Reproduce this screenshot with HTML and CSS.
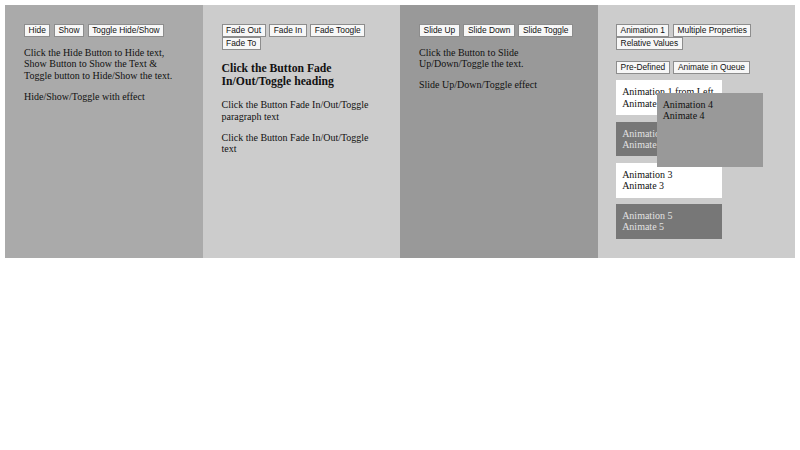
FILE: index.html
```html
<!DOCTYPE html>
<html lang="en">
<head>
<meta charset="utf-8">
<title>jQuery Effects</title>
<link rel="stylesheet" href="styles.css">
</head>
<body>
<div class="row">
  <section class="col col-a">
    <div class="btns">
      <button class="btn">Hide</button>
      <button class="btn">Show</button>
      <button class="btn">Toggle Hide/Show</button>
    </div>
    <p>Click the Hide Button to Hide text, Show Button to Show the Text &amp; Toggle button to Hide/Show the text.</p>
    <p>Hide/Show/Toggle with effect</p>
  </section>
  <section class="col col-b">
    <div class="btns">
      <button class="btn">Fade Out</button>
      <button class="btn">Fade In</button>
      <button class="btn">Fade Toogle</button>
      <button class="btn">Fade To</button>
    </div>
    <h3>Click the Button Fade In/Out/Toggle heading</h3>
    <p>Click the Button Fade In/Out/Toggle paragraph text</p>
    <p>Click the Button Fade In/Out/Toggle text</p>
  </section>
  <section class="col col-c">
    <div class="btns">
      <button class="btn">Slide Up</button>
      <button class="btn">Slide Down</button>
      <button class="btn">Slide Toggle</button>
    </div>
    <p>Click the Button to Slide Up/Down/Toggle the text.</p>
    <p>Slide Up/Down/Toggle effect</p>
  </section>
  <section class="col col-d">
    <div class="btns">
      <button class="btn">Animation 1</button>
      <button class="btn">Multiple Properties</button>
      <button class="btn">Relative Values</button>
    </div>
    <div class="btns btns-second">
      <button class="btn">Pre-Defined</button>
      <button class="btn">Animate in Queue</button>
    </div>
    <div class="boxes">
      <div class="box box-light">Animation 1 from Left<br>Animate 1</div>
      <div class="box box-dark">Animation 2<br>Animate 2</div>
      <div class="box box-light">Animation 3<br>Animate 3</div>
      <div class="box box-dark">Animation 5<br>Animate 5</div>
    </div>
    <div class="box box-moving">Animation 4<br>Animate 4</div>
  </section>
</div>
</body>
</html>
```
FILE: styles.css
```css
html, body {
  margin: 0;
  padding: 0;
  background: #fff;
}

body {
  padding: 5px;
  font-family: "Liberation Serif", "Times New Roman", serif;
  font-size: 10px;
  line-height: 11.33px;
  color: #111;
}

.row {
  display: grid;
  grid-template-columns: repeat(4, 1fr);
}

.col {
  padding: 19px 19px 19.5px 19px;
  min-width: 0;
}

.col-a { background: #aaaaaa; }
.col-b { background: #cccccc; }
.col-c { background: #999999; }
.col-d { background: #cccccc; position: relative; padding-left: 18.5px; }

.btns {
  display: flex;
  flex-wrap: wrap;
  column-gap: 3.5px;
  row-gap: 0;
}

.btns-second {
  margin-top: 11px;
}

.btn {
  font-family: "Liberation Sans", Arial, sans-serif;
  font-size: 8.4px;
  line-height: 9px;
  height: 13px;
  padding: 1px 3.6px;
  margin: 0;
  border: 1px solid #8d8d8d;
  border-radius: 0;
  background: #f7f7f7;
  color: #111;
  box-sizing: border-box;
}

p {
  margin: 9.85px 0 0 0;
}

h3 {
  font-size: 11.7px;
  line-height: 13.2px;
  font-weight: bold;
  margin: 11.5px 0 0 0;
}

h3 + p {
  margin-top: 11.5px;
}

.boxes {
  margin-top: 6.3px;
  display: flex;
  flex-direction: column;
  gap: 6.6px;
}

.box {
  width: 94px;
  padding: 6.15px;
  line-height: 11.2px;
}

.box-light {
  background: #ffffff;
  color: #111;
}

.box-dark {
  background: #777777;
  color: #e2e2e2;
}

.box-moving {
  position: absolute;
  left: 59px;
  top: 88px;
  height: 61.5px;
  background: #999999;
  color: #111;
}
```
